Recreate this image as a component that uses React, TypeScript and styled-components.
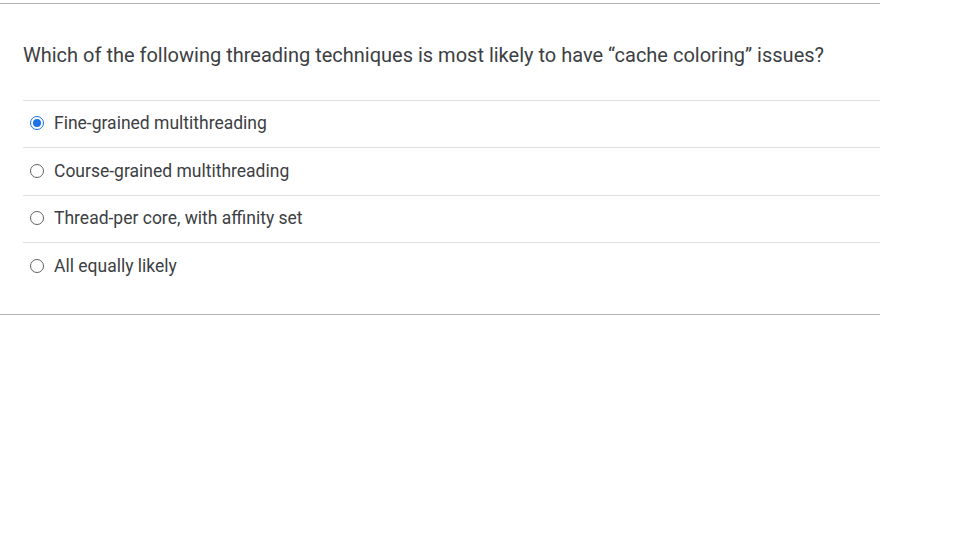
import React, { FC } from "react";
import styled, { createGlobalStyle } from "styled-components";

const GlobalStyle = createGlobalStyle`
  html, body {
    margin: 0;
    padding: 0;
    background: #ffffff;
    font-family: Roboto, "Liberation Sans", Arial, sans-serif;
  }
`;

const Page = styled.div`
  padding-top: 3px;
  width: 880px;
`;

const Card = styled.div`
  border-top: 1px solid #b4b4b4;
  border-bottom: 1px solid #b4b4b4;
  padding: 0 0 23px 23px;
`;

const Question = styled.div`
  font-size: 20px;
  color: #3c4043;
  height: 97px;
  padding-top: 6px;
  line-height: 20px;
  display: flex;
  align-items: center;
  border-bottom: 1px solid #e0e0e0;
  box-sizing: border-box;
`;

const Options = styled.div`
  display: flex;
  flex-direction: column;
`;

const Option = styled.label<{ $last?: boolean }>`
  display: flex;
  align-items: center;
  gap: 10px;
  height: 47.4px;
  box-sizing: border-box;
  padding-bottom: 2px;
  border-bottom: ${(p) => (p.$last ? "none" : "1px solid #e0e0e0")};
  padding-left: 7px;
  font-size: 17.5px;
  color: #3c4043;
`;

const Radio = styled.span<{ $checked?: boolean }>`
  width: 14px;
  height: 14px;
  flex-shrink: 0;
  border-radius: 50%;
  box-sizing: border-box;
  border: 1px solid ${(p) => (p.$checked ? "#1a73e8" : "#5f6368")};
  display: flex;
  align-items: center;
  justify-content: center;

  &::after {
    content: "";
    width: 8px;
    height: 8px;
    border-radius: 50%;
    background: ${(p) => (p.$checked ? "#1a73e8" : "transparent")};
  }
`;

const options = [
  "Fine-grained multithreading",
  "Course-grained multithreading",
  "Thread-per core, with affinity set",
  "All equally likely",
];

const App: FC = () => (
  <Page>
    <GlobalStyle />
    <Card>
      <Question>
        Which of the following threading techniques is most likely to have “cache coloring” issues?
      </Question>
      <Options>
        {options.map((text, i) => (
          <Option key={text} $last={i === options.length - 1}>
            <Radio $checked={i === 0} />
            {text}
          </Option>
        ))}
      </Options>
    </Card>
  </Page>
);

export default App;
